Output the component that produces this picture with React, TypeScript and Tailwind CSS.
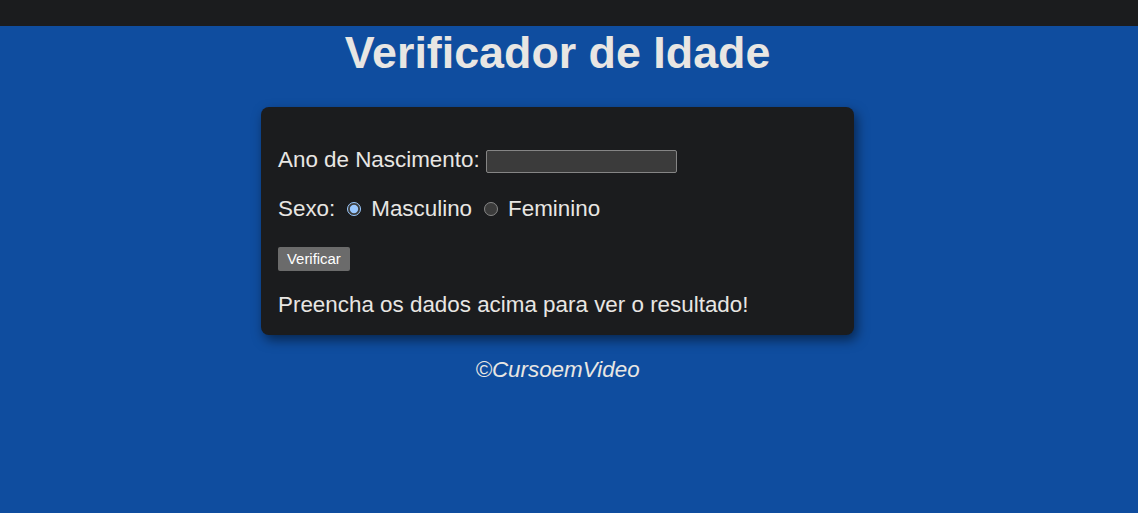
export default function App() {
  return (
    <div className="min-h-[513px] bg-[#0f4d9f] font-['Liberation_Sans',Arial,sans-serif] text-[#e8e6e3]">
      <div className="h-[26px] bg-[#1b1c1e]" />
      <div className="flex w-[1115px] flex-col items-center">
        <h1 className="text-[44.8px] font-bold leading-[52px]">Verificador de Idade</h1>

        <section className="mt-[29px] w-[593px] rounded-lg bg-[#1b1c1e] px-[17px] pt-[40px] pb-[17px] text-[22.4px] leading-[26px] shadow-[3px_5px_12px_rgba(0,0,0,0.5)] [color-scheme:dark]">
          <div className="flex items-center">
            <label htmlFor="ano">Ano de Nascimento:</label>
            <input
              id="ano"
              type="number"
              className="ml-[6px] mt-[2px] h-[23px] w-[191px] rounded-[2px] border border-[#858585] bg-[#3b3b3b] px-1 text-sm outline-none"
            />
          </div>

          <div className="mt-[23px] flex items-center">
            <span>Sexo:</span>
            <input
              type="radio"
              name="sexo"
              id="masc"
              defaultChecked
              className="ml-[12px] mr-[10px] h-[14px] w-[14px]"
            />
            <label htmlFor="masc">Masculino</label>
            <input type="radio" name="sexo" id="fem" className="ml-[12px] mr-[10px] h-[14px] w-[14px]" />
            <label htmlFor="fem">Feminino</label>
          </div>

          <button className="mt-[25px] h-[24px] rounded-[2px] bg-[#6b6b6b] px-[9px] text-[14.9px] leading-[24px] text-white">
            Verificar
          </button>

          <p className="mt-[21px]">Preencha os dados acima para ver o resultado!</p>
        </section>

        <footer className="mt-[22px] text-[22.4px] italic leading-[26px]">&copy;CursoemVideo</footer>
      </div>
    </div>
  );
}
